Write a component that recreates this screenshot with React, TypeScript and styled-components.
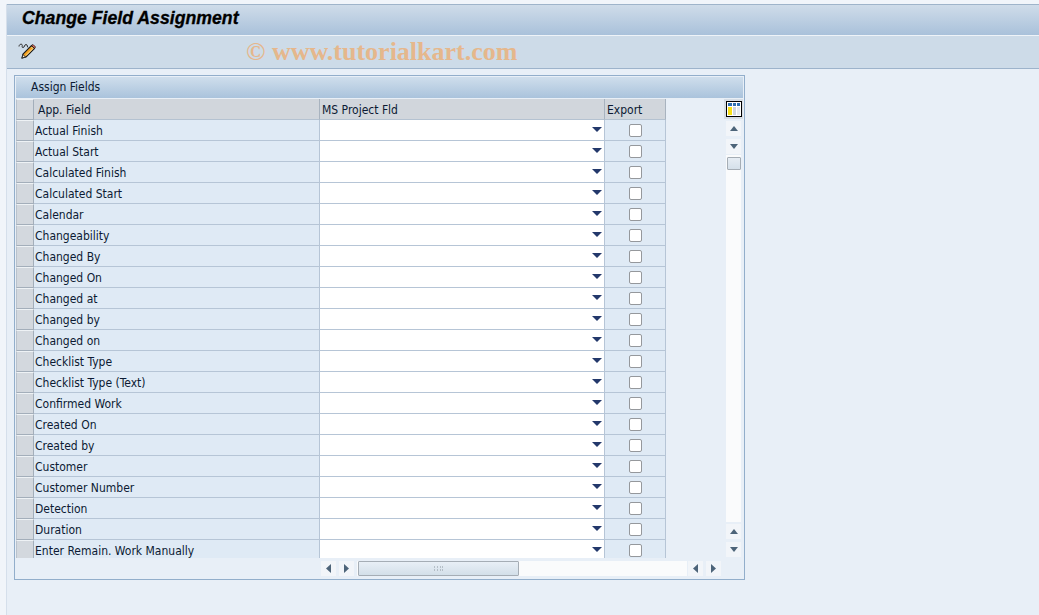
import React from "react";
import styled, { createGlobalStyle } from "styled-components";

const Global = createGlobalStyle`
  html, body { margin: 0; padding: 0; height: 100%; background: #f1f5fa; }
  #root { height: 100%; }
  * { box-sizing: border-box; }
`;

const Page = styled.div`
  width: 1039px;
  height: 615px;
  padding: 4px 0 0 6px;
  overflow: hidden;
  font-family: "DejaVu Sans Condensed", "DejaVu Sans", sans-serif;
  font-size: 12px;
  color: #0c1a33;
`;

const Shell = styled.div`
  height: 611px;
  background: #e8eff7;
  border-left: 1px solid #d5dfeb;
  display: flex;
  flex-direction: column;
`;

const TitleBar = styled.div`
  height: 31px;
  padding: 0 0 4px 15px;
  display: flex;
  align-items: center;
  background: linear-gradient(#cfdce9, #a9c1da);
  border-top: 1px solid #9fb4ca;
`;

const Title = styled.h1`
  margin: 0;
  font: italic bold 17.7px "Liberation Sans", Arial, sans-serif;
  -webkit-text-stroke: 0.3px #000;
  color: #000;
`;

const Toolbar = styled.div`
  position: relative;
  height: 34px;
  padding: 6px 0 0 11px;
  background: #cddbe8;
  border-top: 1px solid #eef3f8;
  border-bottom: 1px solid #9db3cb;
`;

const Watermark = styled.div`
  position: absolute;
  left: 239px;
  top: 1px;
  font: bold 26px "Liberation Serif", "Times New Roman", serif;
  color: #e5b78c;
  white-space: nowrap;
`;

const Panel = styled.section`
  margin: 6px 0 0 7px;
  width: 731px;
  height: 505px;
  padding: 1px;
  background: #e8eff7;
  border: 1px solid #92aecb;
  display: flex;
  flex-direction: column;
`;

const PanelTitle = styled.div`
  height: 22px;
  padding: 0 0 1px 15px;
  display: flex;
  align-items: center;
  background: linear-gradient(#cfdeec, #aac3dc);
  border-bottom: 1px solid #e9eff6;
`;

const TableArea = styled.div`
  display: flex;
  height: 459px;
  overflow: hidden;
`;

const Table = styled.div`
  width: 650px;
  display: grid;
  grid-template-columns: 18px 286px 285px 61px;
  grid-auto-rows: 21px;
  align-content: start;
`;

const Selector = styled.div`
  background: #d3d8de;
  border: 1px solid #a3aeba;
  border-top-color: #eef2f5;
  border-left-color: #b9c2cc;
`;

const HeaderCell = styled.div<{ $indent: number }>`
  padding: 1px 0 0 ${(p) => p.$indent}px;
  display: flex;
  align-items: center;
  white-space: nowrap;
  background: #d1d6dc;
  border-right: 1px solid #a8b3bf;
  border-bottom: 1px solid #b4c2d1;
`;

const LabelCell = styled.div`
  padding: 1px 0 0 1px;
  display: flex;
  align-items: center;
  white-space: nowrap;
  background: #dfeaf5;
  border-right: 1px solid #b6c5d6;
  border-bottom: 1px solid #b6c5d6;
`;

const DropCell = styled.div`
  padding: 0 1px 2px 0;
  display: flex;
  align-items: center;
  justify-content: flex-end;
  background: #fff;
  border-right: 1px solid #b6c5d6;
  border-bottom: 1px solid #b6c5d6;
`;

const CheckCell = styled.div`
  display: flex;
  align-items: center;
  justify-content: center;
  background: #dfeaf5;
  border-right: 1px solid #b6c5d6;
  border-bottom: 1px solid #b6c5d6;
`;

const CheckBox = styled.span`
  width: 13px;
  height: 13px;
  background: #fff;
  border: 1px solid #95989c;
  border-radius: 2px;
`;

const Caret = styled.svg`
  width: 10px;
  height: 5px;
  margin-right: 1px;
`;

const VerticalRail = styled.div`
  width: 19px;
  margin-left: 58px;
  padding: 0 2px 1px;
  display: flex;
  flex-direction: column;
`;

const ConfigButton = styled.div`
  width: 19px;
  height: 20px;
  margin-left: -2px;
  padding-left: 1px;
  display: flex;
  align-items: center;
  justify-content: center;
  background: #d6dde5;
`;

const ScrollButton = styled.div<{ $gap: number }>`
  width: 15px;
  height: 15px;
  margin-top: ${(p) => p.$gap}px;
  display: flex;
  align-items: center;
  justify-content: center;
  background: #f2f5f9;
`;

const VerticalTrack = styled.div`
  flex: 1;
  width: 15px;
  margin-top: 1px;
  padding-top: 2px;
  background: #fafbfc;
`;

const VerticalThumb = styled.div`
  width: 14px;
  height: 13px;
  margin-left: 1px;
  background: linear-gradient(#e6edf4, #d5e0ea);
  border: 1px solid #a5adb5;
  border-radius: 1px;
`;

const BottomBar = styled.div`
  height: 20px;
  padding: 3px 0 0 305px;
  display: flex;
  align-items: flex-start;
  gap: 3px;
`;

const HorizontalTrack = styled.div`
  width: 330px;
  height: 15px;
  margin-right: -2px;
  padding-left: 1px;
  background: #fafbfc;
`;

const HorizontalThumb = styled.div`
  width: 161px;
  height: 15px;
  display: flex;
  align-items: center;
  justify-content: center;
  background: linear-gradient(#e8eff6, #d3dfe9);
  border: 1px solid #a5adb5;
  border-radius: 1px;
`;

const Grip = styled.svg`
  width: 9px;
  height: 6px;
`;

const ArrowButton = styled.div`
  width: 15px;
  height: 15px;
  display: flex;
  align-items: center;
  justify-content: center;
  background: #f2f5f9;
`;

const fields = [
  "Actual Finish",
  "Actual Start",
  "Calculated Finish",
  "Calculated Start",
  "Calendar",
  "Changeability",
  "Changed By",
  "Changed On",
  "Changed at",
  "Changed by",
  "Changed on",
  "Checklist Type",
  "Checklist Type (Text)",
  "Confirmed Work",
  "Created On",
  "Created by",
  "Customer",
  "Customer Number",
  "Detection",
  "Duration",
  "Enter Remain. Work Manually",
];

const Arrow = ({ dir }: { dir: "up" | "down" | "left" | "right" }) => {
  const points = {
    up: "0,5 8,5 4,0",
    down: "0,0 8,0 4,5",
    left: "5,0 5,9 0,4.5",
    right: "0,0 0,9 5,4.5",
  }[dir];
  const vertical = dir === "up" || dir === "down";
  return (
    <svg width={vertical ? 8 : 5} height={vertical ? 5 : 9}>
      <polygon points={points} fill="#4d6479" />
    </svg>
  );
};

const PencilIcon = () => (
  <svg width="18" height="17" viewBox="0 0 18 17">
    <path d="M1 4.500c0-2 2-3 3-2s-1 3 1 3 1-3 3-3 1 3 2 3" fill="none" stroke="#333" strokeWidth="1" />
    <path d="M13.500 3.500l3 3-8.500 8.500-4 1 1-4z" fill="#f4a11e" stroke="#1a1a1a" strokeWidth="1.100" />
    <path d="M13.500 5l1.500 1.500-7 7" fill="none" stroke="#fde6a8" strokeWidth="1" />
    <path d="M5 12.500l2.500 2.500-3.500 1z" fill="#fbeedd" stroke="#1a1a1a" strokeWidth="0.800" />
    <path d="M13.500 3.500l3 3 1-1.500-2.500-2.500z" fill="#e86a5a" stroke="#1a1a1a" strokeWidth="0.800" />
  </svg>
);

const ColumnsIcon = () => (
  <svg width="16" height="16" viewBox="0 0 16 16">
    <rect x="0.500" y="0.500" width="15" height="15" fill="#fff" stroke="#000" />
    <rect x="2" y="2" width="4" height="3" fill="#2f6fb0" />
    <rect x="7" y="2" width="3" height="3" fill="#2f6fb0" />
    <rect x="11" y="2" width="3" height="3" fill="#2f6fb0" />
    <rect x="2" y="6" width="4" height="8" fill="#f7e017" />
    <rect x="7" y="6" width="3" height="8" fill="#cfd6dd" />
    <rect x="11" y="6" width="3" height="8" fill="#e6eaee" />
  </svg>
);

export default function App() {
  return (
    <Page>
      <Global />
      <Shell>
        <TitleBar>
          <Title>Change Field Assignment</Title>
        </TitleBar>
        <Toolbar>
          <PencilIcon />
          <Watermark>© www.tutorialkart.com</Watermark>
        </Toolbar>
        <Panel>
          <PanelTitle>Assign Fields</PanelTitle>
          <TableArea>
            <Table>
              <Selector />
              <HeaderCell $indent={4}>App. Field</HeaderCell>
              <HeaderCell $indent={2}>MS Project Fld</HeaderCell>
              <HeaderCell $indent={2}>Export</HeaderCell>
              {fields.map((field) => (
                <React.Fragment key={field}>
                  <Selector />
                  <LabelCell>{field}</LabelCell>
                  <DropCell>
                    <Caret viewBox="0 0 10 5">
                      <polygon points="0,0 10,0 5,5" fill="#23386b" />
                    </Caret>
                  </DropCell>
                  <CheckCell>
                    <CheckBox />
                  </CheckCell>
                </React.Fragment>
              ))}
            </Table>
            <VerticalRail>
              <ConfigButton>
                <ColumnsIcon />
              </ConfigButton>
              <ScrollButton $gap={2}>
                <Arrow dir="up" />
              </ScrollButton>
              <ScrollButton $gap={3}>
                <Arrow dir="down" />
              </ScrollButton>
              <VerticalTrack>
                <VerticalThumb />
              </VerticalTrack>
              <ScrollButton $gap={2}>
                <Arrow dir="up" />
              </ScrollButton>
              <ScrollButton $gap={3}>
                <Arrow dir="down" />
              </ScrollButton>
            </VerticalRail>
          </TableArea>
          <BottomBar>
            <ArrowButton>
              <Arrow dir="left" />
            </ArrowButton>
            <ArrowButton>
              <Arrow dir="right" />
            </ArrowButton>
            <HorizontalTrack>
              <HorizontalThumb>
                <Grip viewBox="0 0 9 6">
                  <path d="M0 1h1M3 1h1M6 1h1M0 4h1M3 4h1M6 4h1M8 1h1M8 4h1" stroke="#8b959e" strokeWidth="1" />
                </Grip>
              </HorizontalThumb>
            </HorizontalTrack>
            <ArrowButton>
              <Arrow dir="left" />
            </ArrowButton>
            <ArrowButton>
              <Arrow dir="right" />
            </ArrowButton>
          </BottomBar>
        </Panel>
      </Shell>
    </Page>
  );
}
